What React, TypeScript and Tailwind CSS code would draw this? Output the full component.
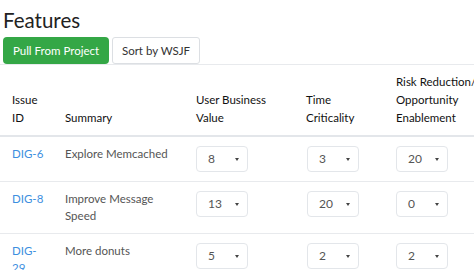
import React from 'react'

const rows = [
  { id: 'DIG-6', summary: 'Explore Memcached', ubv: '8', tc: '3', rr: '20' },
  { id: 'DIG-8', summary: 'Improve Message Speed', ubv: '13', tc: '20', rr: '0' },
  { id: 'DIG-29', summary: 'More donuts', ubv: '5', tc: '2', rr: '2' },
]

function FakeSelect({ value }: { value: string }) {
  return (
    <div className="flex h-[26px] w-[52px] items-center justify-between rounded-[4px] border border-[#e3e6ea] bg-white pl-[11px] pr-[7px] text-[12px] text-[#555]">
      <span>{value}</span>
      <svg width="6" height="5" viewBox="0 0 6 5" className="text-[#444]">
        <path d="M1 1 L5 1 L3 4 Z" fill="currentColor" />
      </svg>
    </div>
  )
}

export default function App() {
  return (
    <div className="h-[270px] w-[474px] overflow-hidden bg-white [font-family:Lato,sans-serif] text-[#212529]">
      <h1 className="pl-[3px] pt-[6px] text-[20.5px] leading-[28px] text-[#222]">Features</h1>
      <div className="mt-[3px] flex gap-[3px] pl-[3px]">
        <button className="h-[27px] w-[106px] rounded-[4px] bg-[#34a746] text-[11.5px] text-white">Pull From Project</button>
        <button className="h-[27px] w-[88px] rounded-[3px] border border-[#dcdfe3] bg-white text-[11.5px] text-[#333]">Sort by WSJF</button>
      </div>
      <table className="w-[520px] table-fixed border-collapse text-[11.5px]">
        <colgroup>
          <col className="w-[53px]" />
          <col className="w-[131px]" />
          <col className="w-[111px]" />
          <col className="w-[89px]" />
          <col className="w-[136px]" />
        </colgroup>
        <thead>
          <tr className="border-t border-b-2 border-t-[#e8eaed] border-b-[#e3e6ea] text-left align-bottom leading-[18px] text-[#111]">
            <th className="pl-[12px] pr-[7px] py-[8px] font-normal">Issue ID</th>
            <th className="pl-[12px] pr-[4px] py-[8px] font-normal">Summary</th>
            <th className="px-[12px] py-[8px] font-normal">User Business Value</th>
            <th className="px-[11px] py-[8px] font-normal">Time Criticality</th>
            <th className="px-[12px] py-[8px] font-normal">Risk Reduction/ Opportunity Enablement</th>
          </tr>
        </thead>
        <tbody>
          {rows.map(r => (
            <tr key={r.id} className="border-b border-[#e8eaed] align-top leading-[16.5px]">
              <td className="pl-[12px] pr-[7px] py-[9px] text-[#3d8fe0]">{r.id}</td>
              <td className="pl-[12px] pr-[4px] py-[9px] text-[#555]">{r.summary}</td>
              <td className="px-[12px] py-[9px]"><FakeSelect value={r.ubv} /></td>
              <td className="px-[12px] py-[9px]"><FakeSelect value={r.tc} /></td>
              <td className="px-[12px] py-[9px]"><FakeSelect value={r.rr} /></td>
            </tr>
          ))}
        </tbody>
      </table>
    </div>
  )
}
